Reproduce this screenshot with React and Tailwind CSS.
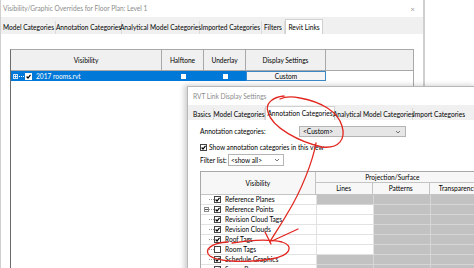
import React from 'react';

const Check = ({ checked = true, white = false }) => (
    <span
        className={`inline-flex shrink-0 items-center justify-center w-[7px] h-[7px] border bg-white ${
            white ? 'border-white' : 'border-[#444]'
        }`}
    >
        {checked && (
            <svg viewBox="0 0 5 5" className="w-[5px] h-[5px]">
                <path d="M0.6 2.5 L2 4 L4.5 0.8" fill="none" stroke="#000" strokeWidth="1.2" />
            </svg>
        )}
    </span>
);

const Chevron = () => (
    <svg viewBox="0 0 6 4" className="w-[6px] h-[4px]">
        <path d="M1 1 L3 3 L5 1" fill="none" stroke="#555" strokeWidth="0.8" />
    </svg>
);

const rows = [
    { name: 'Reference Planes', lines: false },
    { name: 'Reference Points', lines: true, expand: true },
    { name: 'Revision Cloud Tags', lines: true },
    { name: 'Revision Clouds', lines: true },
    { name: 'Roof Tags', lines: true },
    { name: 'Room Tags', lines: true, unchecked: true },
    { name: 'Schedule Graphics', lines: false },
    { name: 'Scope Boxes', lines: false },
];

const tabs1 = [
    ['Model Categories', 'w-[54px]'],
    ['Annotation Categories', 'w-[66px]'],
    ['Analytical Model Categories', 'w-[78px]'],
    ['Imported Categories', 'w-[62px]'],
    ['Filters', 'w-[23px]'],
];

const tabs2 = [
    ['Basics', 'w-[23px]'],
    ['Model Categories', 'w-[51px]'],
];

/**
 * Revit visibility/graphic overrides with the link display settings on top
 */
const App = () => {
    return (
        <div className="relative w-[474px] h-[268px] overflow-hidden bg-white text-[6.6px] leading-none text-black whitespace-nowrap font-['Lato',sans-serif]">
            {/* Visibility/Graphic Overrides dialog */}
            <div className="w-[425px] h-full flex flex-col border-l border-r-2 border-[#d0d0d0]">
                <div className="h-[17px] shrink-0 flex items-center justify-between pl-[2px] pr-[8px] text-[#8c8c8c]">
                    <span>Visibility/Graphic Overrides for Floor Plan: Level 1</span>
                    <span className="text-[8px] text-[#a0a0a0]">×</span>
                </div>
                <div className="h-[17px] shrink-0 flex items-end bg-[#f0f0f0] pl-[1px]">
                    {tabs1.map(([label, w]) => (
                        <div
                            key={label}
                            className={`${w} h-[13px] flex items-center justify-center border-r border-[#dadada]`}
                        >
                            {label}
                        </div>
                    ))}
                    <div className="w-[38px] h-[15px] flex items-center justify-center bg-white border border-b-0 border-[#d0d0d0]">
                        Revit Links
                    </div>
                </div>
                <div className="flex-1 pt-[15px] pl-[9px]">
                    <div className="w-[404px] h-full border-l border-l-[#6b6b6b] border-t border-r border-[#a8a8a8]">
                        <div className="flex h-[21px] bg-[#f0f0f0] border-b border-[#a8a8a8]">
                            <div className="w-[151px] flex items-center justify-center border-r border-[#a8a8a8]">Visibility</div>
                            <div className="w-[42px] flex items-center justify-center border-r border-[#a8a8a8]">Halftone</div>
                            <div className="w-[42px] flex items-center justify-center border-r border-[#a8a8a8]">Underlay</div>
                            <div className="w-[80px] flex items-center justify-center border-r border-[#a8a8a8]">Display Settings</div>
                            <div className="flex-1" />
                        </div>
                        <div className="flex h-[10px]">
                            <div className="w-[151px] flex items-center bg-[#0078d7] text-white pl-[2px] gap-[1px]">
                                <span className="w-[5px] h-[5px] border border-[#cfe3f7] flex items-center justify-center">
                                    <svg viewBox="0 0 3 3" className="w-[3px] h-[3px]">
                                        <path d="M0 1.5 H3 M1.5 0 V3" stroke="#fff" strokeWidth="0.8" />
                                    </svg>
                                </span>
                                <span className="w-[5px] border-t border-dotted border-white" />
                                <Check white />
                                <span className="ml-[3px]">2017 rooms.rvt</span>
                            </div>
                            <div className="w-[42px] flex items-center justify-center bg-[#0078d7]">
                                <span className="w-[5px] h-[5px] bg-white" />
                            </div>
                            <div className="w-[42px] flex items-center justify-center bg-[#0078d7]">
                                <span className="w-[5px] h-[5px] bg-white" />
                            </div>
                            <div className="w-[80px] flex items-center justify-center bg-[#f4f4f4] border border-[#3d86c8]">
                                Custom
                            </div>
                            <div className="flex-1" />
                        </div>
                    </div>
                </div>
            </div>

            {/* RVT Link Display Settings dialog, lying over the first */}
            <div className="absolute left-[187px] top-[86px] w-[290px] h-[200px] flex flex-col bg-white border-l border-t border-[#b8b8b8] shadow-[-3px_-1px_5px_rgba(0,0,0,0.18)]">
                <div className="h-[18px] shrink-0 flex items-center pl-[5px] text-[#8c8c8c]">RVT Link Display Settings</div>
                <div className="h-[15px] shrink-0 flex items-end bg-[#f0f0f0] pl-[3px]">
                    {tabs2.map(([label, w]) => (
                        <div
                            key={label}
                            className={`${w} h-[12px] flex items-center justify-center border-r border-[#dadada]`}
                        >
                            {label}
                        </div>
                    ))}
                    <div className="w-[70px] h-[14px] flex items-center justify-center bg-white border border-b-0 border-[#d0d0d0]">
                        Annotation Categories
                    </div>
                    <div className="w-[78px] h-[12px] flex items-center justify-center border-r border-[#dadada]">
                        Analytical Model Categories
                    </div>
                    <div className="w-[52px] h-[12px] flex items-center justify-center">
                        Import Categories
                    </div>
                </div>
                <div className="flex flex-col pl-[12px]">
                    <div className="mt-[6px] h-[11px] flex items-center">
                        <span className="w-[99px]">Annotation categories:</span>
                        <div className="w-[107px] h-[11px] flex items-center justify-between bg-[#e6e6e6] border border-[#b4b4b4] pl-[3px] pr-[4px]">
                            <span>&lt;Custom&gt;</span>
                            <Chevron />
                        </div>
                    </div>
                    <div className="mt-[5px] h-[10px] flex items-center gap-[2px]">
                        <Check />
                        <span>Show annotation categories in this view</span>
                    </div>
                    <div className="mt-[2px] h-[12px] flex items-center">
                        <span className="w-[28px]">Filter list:</span>
                        <div className="w-[56px] h-[12px] flex items-center justify-between bg-white border border-[#b4b4b4] pl-[2px] pr-[3px]">
                            <span>&lt;show all&gt;</span>
                            <Chevron />
                        </div>
                    </div>
                    <div className="mt-[5px] border-l border-t border-[#a8a8a8]">
                        <div className="flex h-[23px] bg-[#f7f7f7] border-b border-[#c4c4c4]">
                            <div className="w-[116px] flex items-center justify-center border-r border-[#c4c4c4]">Visibility</div>
                            <div className="flex-1 flex flex-col">
                                <div className="h-[11px] flex items-center justify-center border-b border-[#c4c4c4] pr-[8px]">Projection/Surface</div>
                                <div className="flex-1 flex">
                                    <div className="w-[57px] flex items-center justify-center border-r border-[#c4c4c4]">Lines</div>
                                    <div className="w-[57px] flex items-center justify-center border-r border-[#c4c4c4]">Patterns</div>
                                    <div className="flex-1 flex items-center pl-[9px] overflow-hidden">Transparency</div>
                                </div>
                            </div>
                        </div>
                        {rows.map((row) => (
                            <div key={row.name} className="flex h-[10px]">
                                <div className="w-[116px] flex items-center border-r border-b border-[#e2e2e2] pl-[3px]">
                                    {row.expand ? (
                                        <span className="w-[5px] h-[5px] border border-[#8a8a8a] flex items-center justify-center">
                                            <span className="w-[3px] border-t border-[#555]" />
                                        </span>
                                    ) : (
                                        <span className="w-[5px]" />
                                    )}
                                    <span className="w-[5px] border-t border-dotted border-[#999]" />
                                    <Check checked={!row.unchecked} />
                                    <span className="ml-[4px]">{row.name}</span>
                                </div>
                                <div
                                    className={`w-[57px] border-r border-b ${
                                        row.lines ? 'bg-white border-[#e2e2e2]' : 'bg-[#c2c2c2] border-[#d6d6d6]'
                                    }`}
                                />
                                <div className="w-[57px] bg-[#c2c2c2] border-r border-b border-[#d6d6d6]" />
                                <div className="flex-1 bg-[#c2c2c2] border-b border-[#d6d6d6]" />
                            </div>
                        ))}
                    </div>
                </div>
            </div>

            {/* red hand-drawn marks */}
            <svg className="absolute inset-0 pointer-events-none" width="474" height="268" viewBox="0 0 474 268">
                <g fill="none" stroke="#e3261f" strokeWidth="1.3" strokeLinecap="round">
                    <path d="M284 96 C272 97 265 104 268 112 C272 128 300 142 322 147 C339 149 346 139 342 126 C338 112 322 102 300 98 C291 96 284 97 280 99" />
                    <path d="M316 143 C313 160 302 190 287 214 C279 228 273 236 270 242" />
                    <path d="M298 229 L272 241" />
                    <path d="M265 232 L271 244" />
                    <path d="M228 242 C211 243 203 250 210 256 C218 262 250 263 271 259 C290 256 295 246 282 242 C270 239 250 240 232 243" />
                </g>
            </svg>
        </div>
    );
};

export default App;
